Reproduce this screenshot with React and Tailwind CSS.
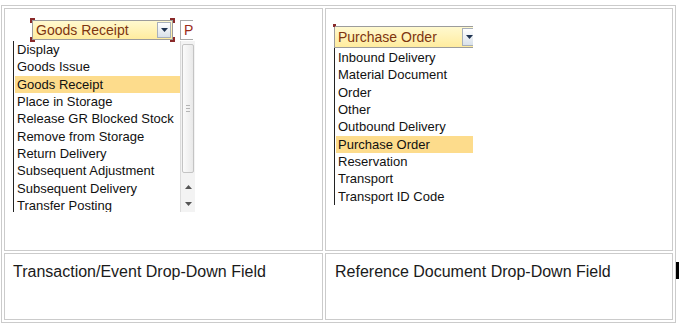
import React from "react";

const txn = [
    "Display",
    "Goods Issue",
    "Goods Receipt",
    "Place in Storage",
    "Release GR Blocked Stock",
    "Remove from Storage",
    "Return Delivery",
    "Subsequent Adjustment",
    "Subsequent Delivery",
    "Transfer Posting",
];

const refDocs = [
    "Inbound Delivery",
    "Material Document",
    "Order",
    "Other",
    "Outbound Delivery",
    "Purchase Order",
    "Reservation",
    "Transport",
    "Transport ID Code",
];

const sap = { fontFamily: "Tahoma, 'Liberation Sans', Arial, sans-serif" };

const Arrow = ({ down = true, color = "#1f3350" }) => (
    <svg width="7" height="4" viewBox="0 0 7 4">
        {down ? <path d="M0 0h7L3.5 4z" fill={color} /> : <path d="M0 4h7L3.5 0z" fill={color} />}
    </svg>
);

const Corners = () => (
    <>
        <span className="absolute -left-[3px] -top-[3px] w-[5px] h-[5px] border-l-2 border-t-2 border-[#8a2a2a]" />
        <span className="absolute -right-[3px] -top-[3px] w-[5px] h-[5px] border-r-2 border-t-2 border-[#8a2a2a]" />
        <span className="absolute -left-[3px] -bottom-[3px] w-[5px] h-[5px] border-l-2 border-b-2 border-[#8a2a2a]" />
        <span className="absolute -right-[3px] -bottom-[3px] w-[5px] h-[5px] border-r-2 border-b-2 border-[#8a2a2a]" />
    </>
);

const ListItems = ({ items, active }) =>
    items.map((it) => (
        <div
            key={it}
            className={`h-[17.35px] leading-[17px] pl-[2px] whitespace-nowrap text-[13px] text-[#111] ${it === active ? "bg-[#fddc8c]" : ""}`}
        >
            {it}
        </div>
    ));

export default function App() {
    return (
        <div className="w-[681px] h-[323px] bg-white flex items-start overflow-hidden">
            <div className="ml-[1px] mt-[5px] border border-[#cbcbcb] p-[2px] grid grid-cols-[319px_348px] grid-rows-[243px_67px] gap-[2px]">
                {/* transaction / event drop-down */}
                <div className="border border-[#cbcbcb] pl-[8px] pt-[11px]" style={sap}>
                    <div className="flex items-start">
                        <div className="relative ml-[19px] w-[141px] h-[20px] border border-[#9c9c9c] bg-gradient-to-b from-[#fff9cf] to-[#ffec9e] flex">
                            <Corners />
                            <div className="flex-1 pl-[3px] leading-[18px] text-[14px] text-[#7e3510]">Goods Receipt</div>
                            <div className="w-[14px] my-[1px] mr-[1px] border border-[#a8b0bb] bg-gradient-to-b from-white to-[#d9e1ea] flex items-center justify-center">
                                <Arrow />
                            </div>
                        </div>
                        <div className="ml-[7px] w-[13px] h-[20px] border-l border-t border-b border-[#a8a8a8] bg-white pl-[3px] leading-[18px] text-[14px] text-[#9a2b1a] overflow-hidden">
                            P
                        </div>
                    </div>
                    <div className="mt-[1px] flex h-[171px]">
                        <div className="w-[167px] border-l border-[#222] overflow-hidden pl-[1px]">
                            <ListItems items={txn} active="Goods Receipt" />
                        </div>
                        <div className="w-[15px] bg-[#f3f3f3] border-l border-[#dcdcdc] flex flex-col items-center pt-[3px]">
                            <div className="w-[12px] h-[129px] border border-[#c4c4c4] rounded-[2px] bg-gradient-to-r from-[#fbfbfb] to-[#e9e9e9] flex items-center justify-center">
                                <div className="flex flex-col gap-[2px]">
                                    <span className="block w-[4px] h-[1px] bg-[#b5b5b5]" />
                                    <span className="block w-[4px] h-[1px] bg-[#b5b5b5]" />
                                    <span className="block w-[4px] h-[1px] bg-[#b5b5b5]" />
                                </div>
                            </div>
                            <div className="mt-[12px]">
                                <Arrow down={false} color="#555" />
                            </div>
                            <div className="mt-[13px]">
                                <Arrow color="#555" />
                            </div>
                        </div>
                    </div>
                </div>

                {/* reference document drop-down */}
                <div className="border border-[#cbcbcb] pl-[8px] pt-[17px]" style={sap}>
                    <div className="relative w-[139px] h-[22px] border-t border-l border-b border-[#9c9c9c] bg-gradient-to-b from-[#fff9cf] to-[#ffec9e] flex">
                        <span className="absolute -left-[2px] -top-[3px] w-[3px] h-[3px] border-l-2 border-t-2 border-[#8a2a2a]" />
                        <div className="flex-1 pl-[3px] leading-[20px] text-[14px] text-[#7e3510]">Purchase Order</div>
                        <div className="w-[11px] my-[1px] border-l border-t border-b border-[#a8b0bb] bg-gradient-to-b from-white to-[#d9e1ea] flex items-center justify-end overflow-hidden">
                            <Arrow />
                        </div>
                    </div>
                    <div className="w-[139px] h-[157px] border-l border-[#222] overflow-hidden pl-[1px] pt-[1px]">
                        <ListItems items={refDocs} active="Purchase Order" />
                    </div>
                </div>

                <div className="border border-[#cbcbcb] pl-[8px] pt-[9px] text-[16px] leading-[18px] text-[#1a1a1a]" style={{ fontFamily: "'Liberation Sans', Arial, sans-serif" }}>
                    Transaction/Event Drop-Down Field
                </div>
                <div className="border border-[#cbcbcb] pl-[9px] pt-[9px] text-[16px] leading-[18px] text-[#1a1a1a]" style={{ fontFamily: "'Liberation Sans', Arial, sans-serif" }}>
                    Reference Document Drop-Down Field
                </div>
            </div>
            <div className="ml-[0px] mt-[262px] w-[3px] h-[17px] bg-black" />
        </div>
    );
}
